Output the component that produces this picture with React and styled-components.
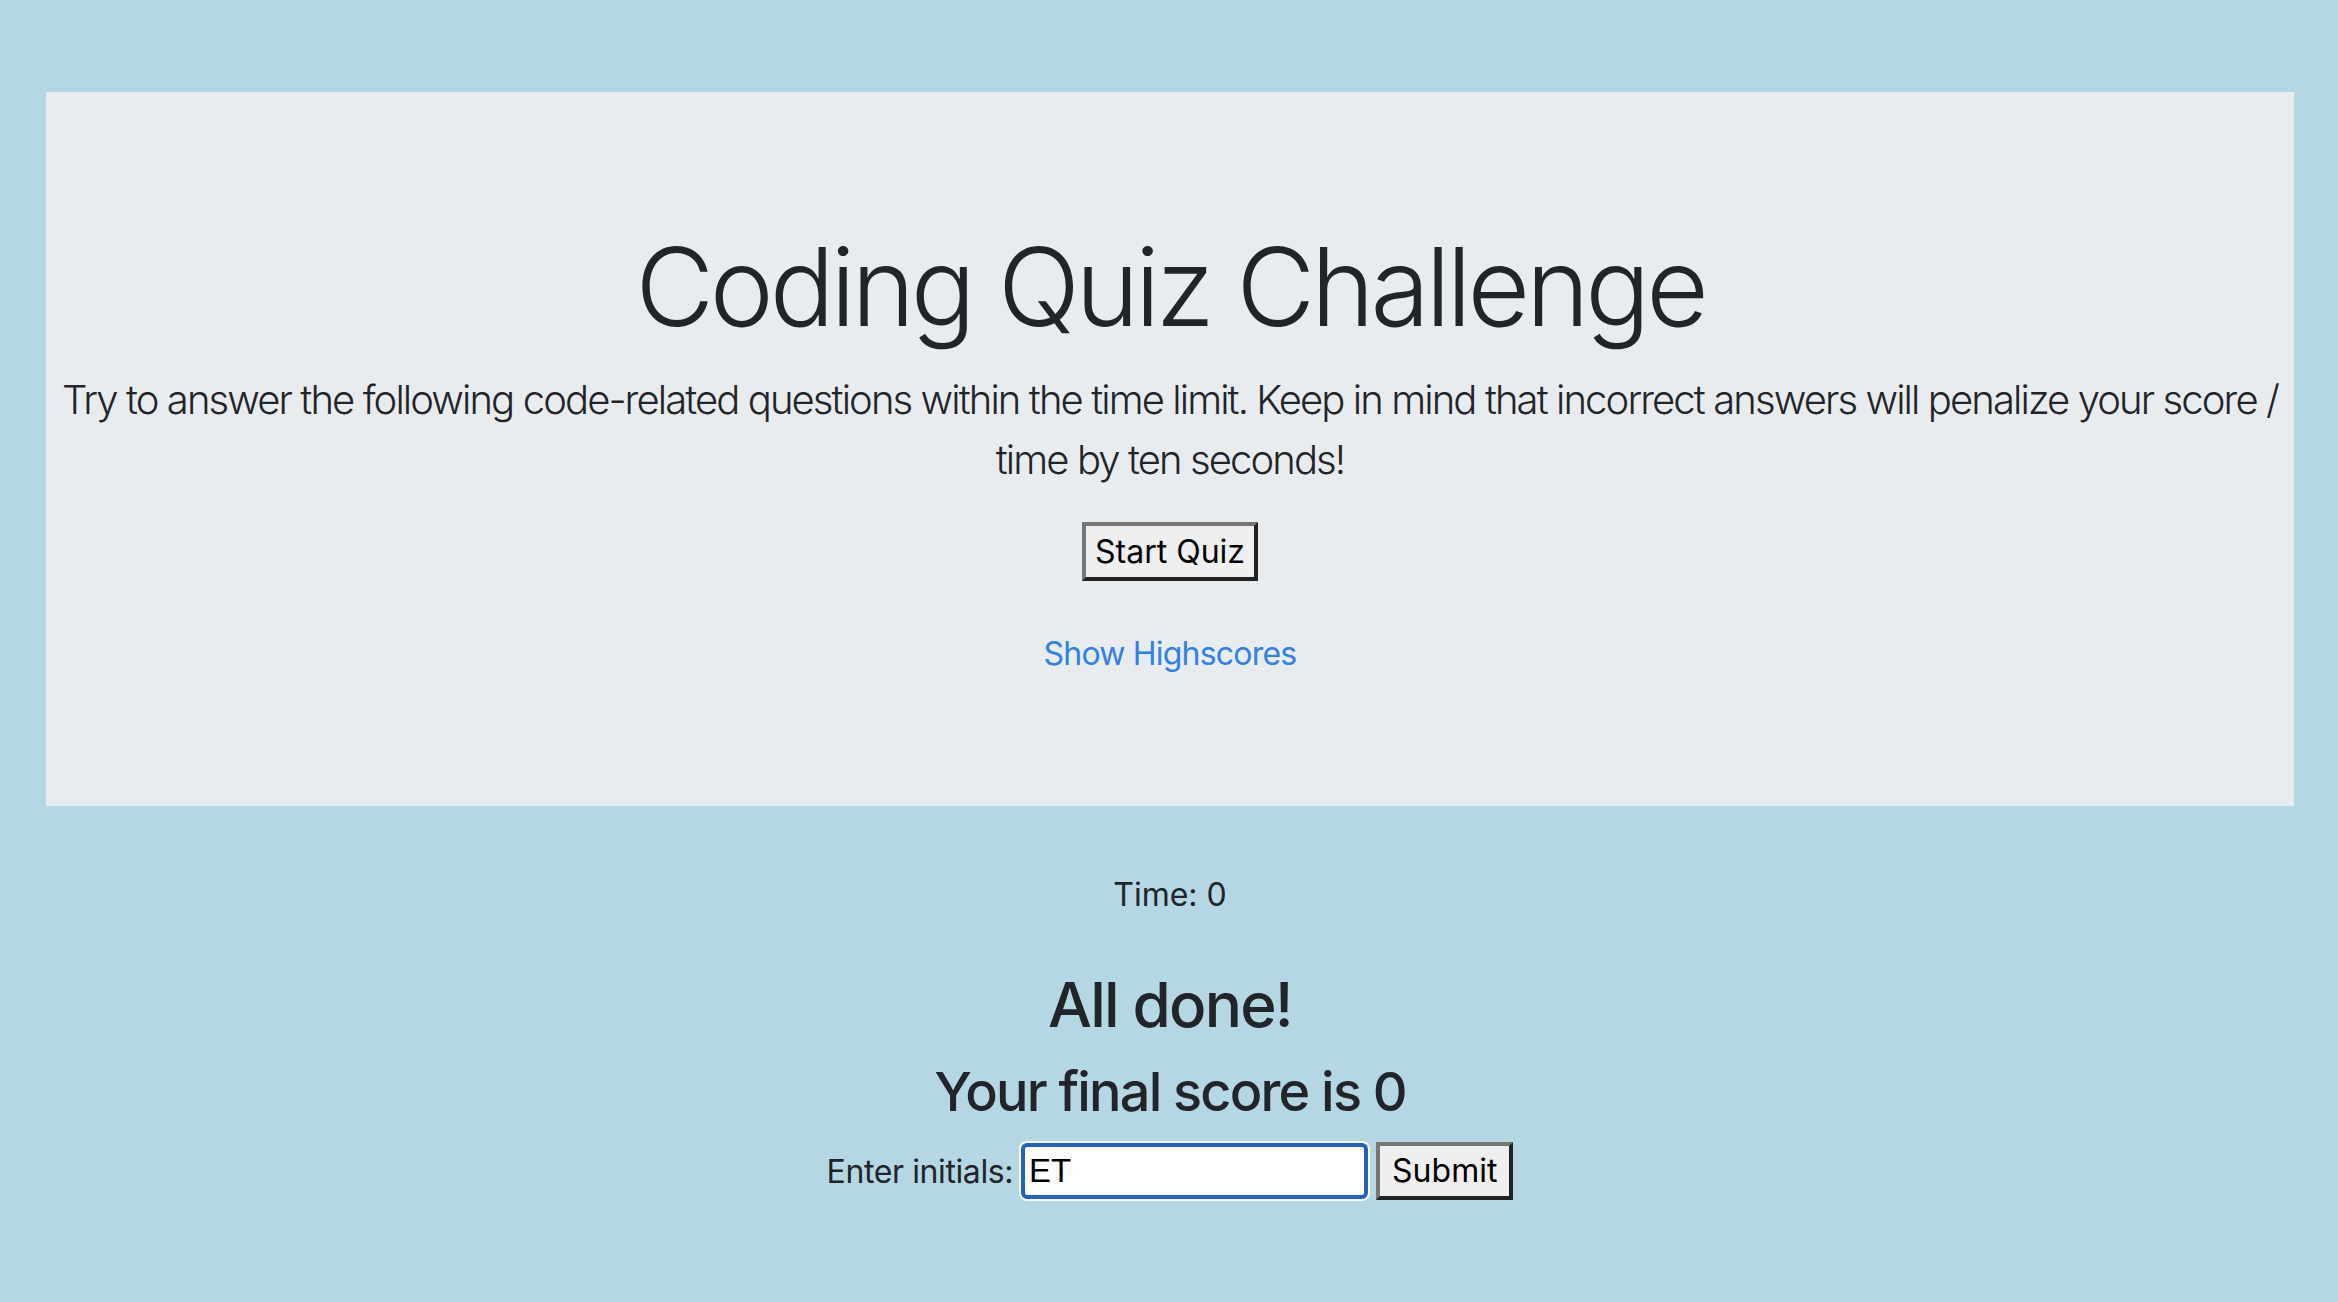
import React, { useState } from 'react'
import styled, { createGlobalStyle } from 'styled-components'

const GlobalStyle = createGlobalStyle`
  html, body {
    margin: 0;
    padding: 0;
    background: #b5d7e3;
  }
  body {
    font-family: Inter, "Noto Sans", "Liberation Sans", sans-serif;
    color: #212529;
  }
`

const Page = styled.div`
  padding: 92px 44px 80px 46px;
  display: flex;
  flex-direction: column;
  align-items: center;
`

const Jumbotron = styled.section`
  align-self: stretch;
  background: #e9ecef;
  padding: 128px 4px 127px;
  display: flex;
  flex-direction: column;
  align-items: center;
  text-align: center;
`

const Title = styled.h1`
  margin: 0 0 16px;
  font-size: 108px;
  font-weight: 300;
  line-height: 134px;
  letter-spacing: -4.2px;
`

const Lead = styled.p`
  margin: 0 0 32px;
  font-size: 40px;
  font-weight: 300;
  line-height: 60px;
  letter-spacing: -1.9px;
`

const Button = styled.button`
  font-family: inherit;
  font-size: 32px;
  line-height: 40px;
  color: #000;
  background: #efefef;
  border: 4px solid;
  border-color: #767676 #222 #222 #767676;
  border-radius: 0;
  padding: ${({ $wide }) => ($wide ? '6px 9px 5px' : '5px 12px 5px')};
  cursor: pointer;
`

const Link = styled.a`
  margin-top: 48px;
  font-size: 32px;
  line-height: 50px;
  letter-spacing: -0.8px;
  color: #2f80ed;
  text-decoration: none;
  cursor: pointer;
`

const Timer = styled.p`
  margin: 65px 0 49px;
  font-size: 32px;
  line-height: 48px;
`

const Heading = styled.h2`
  margin: 0 0 ${({ $gap }) => $gap}px;
  font-size: ${({ $size }) => $size}px;
  font-weight: 500;
  line-height: 1.2;
  letter-spacing: -1.8px;
`

const Form = styled.form`
  display: flex;
  align-items: center;
  gap: 6px;
  margin-top: 2px;
`

const Label = styled.label`
  font-size: 32px;
  letter-spacing: -0.4px;
`

const Input = styled.input`
  box-sizing: border-box;
  width: 347px;
  height: 56px;
  margin: 2px;
  padding: 0 4px;
  font-family: "Liberation Sans", Arial, sans-serif;
  font-size: 33px;
  color: #000;
  background: #fff;
  border: 4px solid #2160c4;
  border-radius: 6px;
  box-shadow: 0 0 0 2px #fff;
  outline: none;
`

export default function App() {
  const [initials, setInitials] = useState('ET')

  return (
    <>
      <GlobalStyle />
      <Page>
        <Jumbotron>
          <Title>Coding Quiz Challenge</Title>
          <Lead>
            Try to answer the following code-related questions within the time limit. Keep in mind that incorrect answers will penalize your score / time by ten seconds!
          </Lead>
          <Button type="button" $wide>Start Quiz</Button>
          <Link>Show Highscores</Link>
        </Jumbotron>

        <Timer>Time: 0</Timer>
        <Heading $size={62} $gap={18}>All done!</Heading>
        <Heading as="h3" $size={54} $gap={14}>Your final score is 0</Heading>
        <Form onSubmit={(e) => e.preventDefault()}>
          <Label htmlFor="initials">Enter initials:</Label>
          <Input
            id="initials"
            value={initials}
            onChange={(e) => setInitials(e.target.value)}
          />
          <Button type="submit">Submit</Button>
        </Form>
      </Page>
    </>
  )
}
